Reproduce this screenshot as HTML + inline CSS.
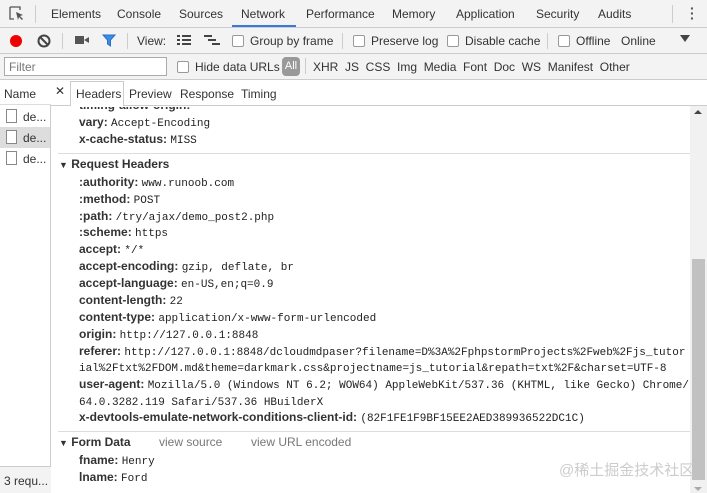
<!DOCTYPE html>
<html><head><meta charset="utf-8"><style>
*{box-sizing:border-box;margin:0;padding:0}
body{width:707px;height:493px;overflow:hidden;background:#fff;font-family:"Liberation Sans",sans-serif;font-size:12px;color:#333;position:relative}
.a{position:absolute;white-space:nowrap}
.bar{position:absolute;left:0;width:707px;background:#f3f3f3;border-bottom:1px solid #ccc}
.cb{display:inline-block;width:12px;height:12px;border:1px solid #999;border-radius:2px;background:#fff;vertical-align:-2px}
.k{font-weight:bold;font-size:12px;color:#333}
.v{font-family:"Liberation Mono",monospace;font-size:11px;color:#222}
.row{position:absolute;left:79px;white-space:nowrap;line-height:17px}
</style></head><body>
<div class="bar" style="top:0;height:28px"></div>
<svg class="a" style="left:9px;top:6px" width="16" height="16"><path d="M1 1h10v3M1 1v12h4" stroke="#555" fill="none" stroke-width="1.3"/><path d="M7 6l7 3-3 1 3 3-1 1-3-3-1 3z" fill="#555"/></svg>
<div class="a" style="left:35px;top:5px;width:1px;height:18px;background:#ccc"></div>
<div class="a" style="top:7px;left:51px;color:#333">Elements</div>
<div class="a" style="top:7px;left:117px">Console</div>
<div class="a" style="top:7px;left:179px">Sources</div>
<div class="a" style="top:7px;left:241px">Network</div>
<div class="a" style="left:232px;top:25px;width:64px;height:2px;background:#3879d9"></div>
<div class="a" style="top:7px;left:306px">Performance</div>
<div class="a" style="top:7px;left:392px">Memory</div>
<div class="a" style="top:7px;left:456px">Application</div>
<div class="a" style="top:7px;left:536px">Security</div>
<div class="a" style="top:7px;left:598px">Audits</div>
<div class="a" style="left:672px;top:5px;width:1px;height:18px;background:#ccc"></div>
<div class="a" style="left:690px;top:6px;font-weight:bold;line-height:5px;font-size:14px;color:#555">·<br>·<br>·</div>
<div class="bar" style="top:28px;height:26px"></div>
<div class="a" style="left:10px;top:35px;width:12px;height:12px;border-radius:50%;background:#e00"></div>
<svg class="a" style="left:37px;top:34px" width="14" height="14"><circle cx="7" cy="7" r="5.5" stroke="#444" stroke-width="2" fill="none"/><path d="M3 3l8 8" stroke="#444" stroke-width="2"/></svg>
<div class="a" style="left:62px;top:33px;width:1px;height:16px;background:#ccc"></div>
<div class="a" style="left:75px;top:36px;width:9px;height:8px;background:#555"></div>
<div class="a" style="left:84px;top:37px;border-right:5px solid #555;border-top:3px solid transparent;border-bottom:3px solid transparent"></div>
<svg class="a" style="left:102px;top:34px" width="14" height="13"><path d="M1 1h12l-4.5 5v6l-3-2v-4z" fill="#3b8de8" stroke="#2a6fc4"/></svg>
<div class="a" style="left:127px;top:33px;width:1px;height:16px;background:#ccc"></div>
<div class="a" style="left:137px;top:34px;color:#333">View:</div>
<svg class="a" style="left:177px;top:35px" width="14" height="12"><path d="M0 1h3M5 1h9M0 5h3M5 5h9M0 9h3M5 9h9" stroke="#444" stroke-width="2"/></svg>
<svg class="a" style="left:204px;top:35px" width="16" height="12"><path d="M0 1h8M4 5h8M8 9h8" stroke="#444" stroke-width="2"/></svg>
<span class="cb a" style="left:232px;top:35px"></span><div class="a" style="left:250px;top:34px">Group by frame</div>
<div class="a" style="left:342px;top:33px;width:1px;height:16px;background:#ccc"></div>
<span class="cb a" style="left:353px;top:35px"></span><div class="a" style="left:371px;top:34px">Preserve log</div>
<span class="cb a" style="left:447px;top:35px"></span><div class="a" style="left:465px;top:34px">Disable cache</div>
<div class="a" style="left:547px;top:33px;width:1px;height:16px;background:#ccc"></div>
<span class="cb a" style="left:558px;top:35px"></span><div class="a" style="left:576px;top:34px">Offline</div>
<div class="a" style="left:621px;top:34px">Online</div>
<div class="a" style="left:680px;top:35px;border-top:7px solid #444;border-left:5px solid transparent;border-right:5px solid transparent"></div>
<div class="bar" style="top:54px;height:26px"></div>
<div class="a" style="left:4px;top:57px;width:163px;height:19px;border:1px solid #aaa;background:#fff;color:#777;padding:2px 4px;font-size:12px">Filter</div>
<span class="cb a" style="left:177px;top:61px"></span><div class="a" style="left:195px;top:60px">Hide data URLs</div>
<div class="a" style="left:282px;top:57px;width:18px;height:19px;border-radius:4px;background:#999;color:#fff;font-size:11px;text-align:center;line-height:19px">All</div>
<div class="a" style="left:305px;top:58px;width:1px;height:16px;background:#ccc"></div>
<div class="a" style="left:313px;top:60px">XHR &nbsp;JS &nbsp;CSS &nbsp;Img &nbsp;Media &nbsp;Font &nbsp;Doc &nbsp;WS &nbsp;Manifest &nbsp;Other</div>
<div class="a" style="left:0;top:80px;width:51px;height:413px;border-right:1px solid #ccc;background:#fff"></div>
<div class="a" style="left:0;top:80px;width:51px;height:25px;border-bottom:1px solid #ddd;background:#fff"></div>
<div class="a" style="left:4px;top:87px">Name</div>
<div class="a" style="left:0;top:127px;width:50px;height:21px;background:#ddd"></div>
<span class="a" style="left:6px;top:109px;width:11px;height:14px;border:1px solid #888;background:#fff"></span><div class="a" style="left:23px;top:110px">de...</div>
<span class="a" style="left:6px;top:130px;width:11px;height:14px;border:1px solid #888;background:#fff"></span><div class="a" style="left:23px;top:131px">de...</div>
<span class="a" style="left:6px;top:151px;width:11px;height:14px;border:1px solid #888;background:#fff"></span><div class="a" style="left:23px;top:152px">de...</div>
<div class="a" style="left:0;top:466px;width:51px;height:27px;border-top:1px solid #ccc;background:#f3f3f3"></div>
<div class="a" style="left:4px;top:474px">3 requ...</div>
<div class="a" style="left:51px;top:80px;width:656px;height:26px;border-bottom:1px solid #ccc;background:#fff"></div>
<div class="a" style="left:55px;top:84px;color:#333">✕</div>
<div class="a" style="left:70px;top:81px;width:54px;height:25px;border:1px solid #ccc;border-bottom:none;background:#fff"></div>
<div class="a" style="left:76px;top:87px">Headers</div>
<div class="a" style="left:129px;top:87px">Preview</div>
<div class="a" style="left:180px;top:87px">Response</div>
<div class="a" style="left:241px;top:87px">Timing</div>
<div class="a" style="left:690px;top:106px;width:17px;height:387px;background:#f1f1f1"></div>
<div class="a" style="left:694px;top:110px;border-bottom:4px solid #444;border-left:4px solid transparent;border-right:4px solid transparent"></div>
<div class="a" style="left:692px;top:259px;width:13px;height:221px;background:#c1c1c1"></div>
<div class="a" style="left:694px;top:487px;border-top:4px solid #aaa;border-left:4px solid transparent;border-right:4px solid transparent"></div>
<div class="a" style="left:79px;top:107px;height:5px;width:200px;overflow:hidden"><div style="margin-top:-9px" class="k">timing-allow-origin: *</div></div>
<div class="row" style="top:114px"><span class="k">vary:</span> <span class="v">Accept-Encoding</span></div>
<div class="row" style="top:131px"><span class="k">x-cache-status:</span> <span class="v">MISS</span></div>
<div class="a" style="left:58px;top:153px;width:632px;height:1px;background:#ddd"></div>
<div class="a" style="left:59px;top:157px;font-size:12px;font-weight:bold;color:#333"><span style="font-size:9px">▼</span> Request Headers</div>
<div class="row" style="top:174px"><span class="k">:authority:</span> <span class="v">www.runoob.com</span></div>
<div class="row" style="top:191px"><span class="k">:method:</span> <span class="v">POST</span></div>
<div class="row" style="top:208px"><span class="k">:path:</span> <span class="v">/try/ajax/demo_post2.php</span></div>
<div class="row" style="top:224px"><span class="k">:scheme:</span> <span class="v">https</span></div>
<div class="row" style="top:241px"><span class="k">accept:</span> <span class="v">*/*</span></div>
<div class="row" style="top:258px"><span class="k">accept-encoding:</span> <span class="v">gzip, deflate, br</span></div>
<div class="row" style="top:275px"><span class="k">accept-language:</span> <span class="v">en-US,en;q=0.9</span></div>
<div class="row" style="top:292px"><span class="k">content-length:</span> <span class="v">22</span></div>
<div class="row" style="top:309px"><span class="k">content-type:</span> <span class="v">application/x-www-form-urlencoded</span></div>
<div class="row" style="top:326px"><span class="k">origin:</span> <span class="v">http://127.0.0.1:8848</span></div>
<div class="row" style="top:343px"><span class="k">referer:</span> <span class="v">http://127.0.0.1:8848/dcloudmdpaser?filename=D%3A%2FphpstormProjects%2Fweb%2Fjs_tutor</span></div>
<div class="row" style="top:359px"><span class="v">ial%2Ftxt%2FDOM.md&amp;theme=darkmark.css&amp;projectname=js_tutorial&amp;repath=txt%2F&amp;charset=UTF-8</span></div>
<div class="row" style="top:376px"><span class="k">user-agent:</span> <span class="v">Mozilla/5.0 (Windows NT 6.2; WOW64) AppleWebKit/537.36 (KHTML, like Gecko) Chrome/</span></div>
<div class="row" style="top:393px"><span class="v">64.0.3282.119 Safari/537.36 HBuilderX</span></div>
<div class="row" style="top:409px"><span class="k">x-devtools-emulate-network-conditions-client-id:</span> <span class="v">(82F1FE1F9BF15EE2AED389936522DC1C)</span></div>
<div class="a" style="left:58px;top:431px;width:632px;height:1px;background:#ddd"></div>
<div class="a" style="left:59px;top:435px;font-size:12px;font-weight:bold;color:#333"><span style="font-size:9px">▼</span> Form Data</div>
<div class="a" style="left:159px;top:435px;color:#777">view source</div>
<div class="a" style="left:251px;top:435px;color:#777">view URL encoded</div>
<div class="row" style="top:452px"><span class="k">fname:</span> <span class="v">Henry</span></div>
<div class="row" style="top:469px"><span class="k">lname:</span> <span class="v">Ford</span></div>
<div class="a" style="left:559px;top:459px;font-family:'Liberation Sans','Noto Sans CJK SC',sans-serif;font-size:15px;color:#ccc">@稀土掘金技术社区</div>
</body></html>
